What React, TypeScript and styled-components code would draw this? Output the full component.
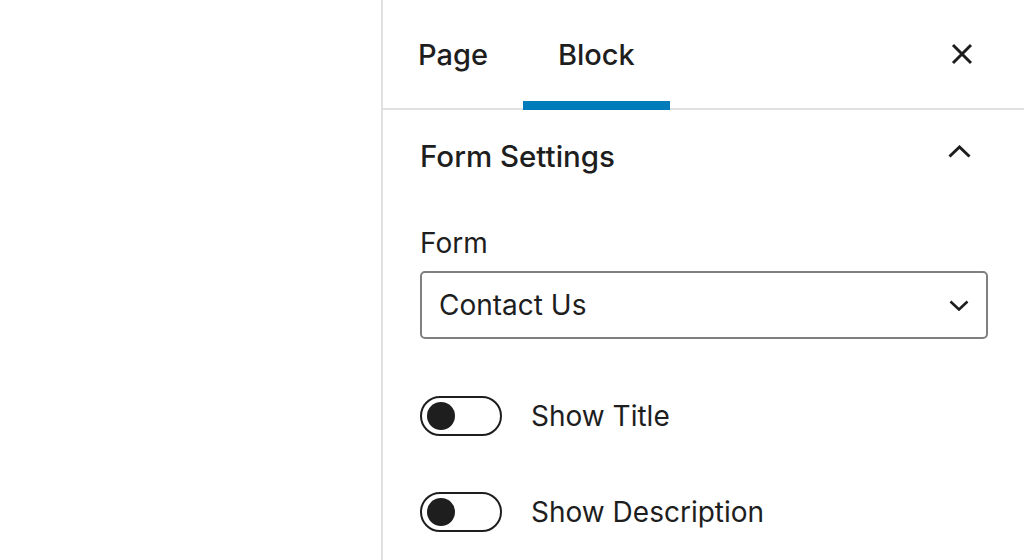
import React, { useState } from "react";
import styled, { createGlobalStyle } from "styled-components";

const GlobalStyle = createGlobalStyle`
  html, body { margin: 0; padding: 0; background: #ffffff; }
  body { font-family: Inter, "Noto Sans", "Liberation Sans", sans-serif; color: #1e1e1e; }
  * { box-sizing: border-box; }
`;

const Page = styled.div`
  display: flex;
  width: 1024px;
  height: 560px;
  overflow: hidden;
  background: #fff;
`;

const Canvas = styled.div`
  width: 381px;
  flex: none;
`;

const Sidebar = styled.aside`
  flex: 1;
  border-left: 2px solid #e0e0e0;
  display: flex;
  flex-direction: column;
`;

const Header = styled.div`
  height: 110px;
  border-bottom: 2px solid #e0e0e0;
  display: flex;
  align-items: stretch;
`;

const Tab = styled.button<{ $active?: boolean }>`
  position: relative;
  background: none;
  border: 0;
  margin: 0;
  padding: 0 35px 0 35px;
  font-family: inherit;
  font-size: 29px;
  font-weight: 500;
  color: #1e1e1e;
  cursor: pointer;
  &::after {
    content: "";
    position: absolute;
    left: 0;
    right: 0;
    bottom: -2px;
    height: 9px;
    background: ${(p) => (p.$active ? "#007cba" : "transparent")};
  }
`;

const CloseButton = styled.button`
  margin-left: auto;
  margin-right: 32px;
  width: 60px;
  background: none;
  border: 0;
  display: flex;
  align-items: center;
  justify-content: center;
  padding: 0;
  cursor: pointer;
`;

const PanelBody = styled.div`
  padding: 0 36px 0 37px;
  display: flex;
  flex-direction: column;
`;

const TitleRow = styled.div`
  height: 94px;
  display: flex;
  align-items: center;
  justify-content: space-between;
`;

const Title = styled.h2`
  margin: 0;
  font-size: 29.5px;
  font-weight: 500;
  line-height: 1;
`;

const TitleIcon = styled.span`
  display: flex;
  padding-right: 17px;
  margin-top: -12px;
`;

const Field = styled.div`
  padding-top: 21px;
  display: flex;
  flex-direction: column;
`;

const Label = styled.label`
  font-size: 28px;
  line-height: 36px;
  font-weight: 400;
`;

const Select = styled.div`
  margin-top: 10px;
  height: 68px;
  border: 2px solid #7f7f7f;
  border-radius: 5px;
  display: flex;
  align-items: center;
  justify-content: space-between;
  padding: 0 17px 0 17px;
  font-size: 28px;
  color: #1e1e1e;
`;

const ToggleRow = styled.div<{ $top: number }>`
  margin-top: ${(p) => p.$top}px;
  display: flex;
  align-items: center;
  gap: 29px;
`;

const Track = styled.button`
  width: 82px;
  height: 40px;
  border: 2px solid #1e1e1e;
  border-radius: 20px;
  background: #fff;
  padding: 0 0 0 5px;
  display: flex;
  align-items: center;
  cursor: pointer;
`;

const Knob = styled.span`
  width: 28px;
  height: 28px;
  border-radius: 50%;
  background: #1e1e1e;
`;

const ToggleLabel = styled.span`
  font-size: 28px;
  line-height: 36px;
`;

const CloseIcon = () => (
  <svg width="22" height="22" viewBox="0 0 22 22">
    <path d="M2 2 L20 20 M20 2 L2 20" stroke="#1e1e1e" strokeWidth="3" fill="none" />
  </svg>
);

const ChevronUp = () => (
  <svg width="23" height="13" viewBox="0 0 23 13">
    <path d="M1.5 11.5 L11.5 2 L21.5 11.5" stroke="#1e1e1e" strokeWidth="3" fill="none" />
  </svg>
);

const ChevronDown = () => (
  <svg width="20" height="11" viewBox="0 0 20 11">
    <path d="M1.5 1.5 L10 9.5 L18.5 1.5" stroke="#1e1e1e" strokeWidth="2.6" fill="none" />
  </svg>
);

const Toggle = ({ label, top }: { label: string; top: number }) => (
  <ToggleRow $top={top}>
    <Track aria-label={label}>
      <Knob />
    </Track>
    <ToggleLabel>{label}</ToggleLabel>
  </ToggleRow>
);

export default function App() {
  const [tab, setTab] = useState("block");
  return (
    <>
      <GlobalStyle />
      <Page>
        <Canvas />
        <Sidebar>
          <Header>
            <Tab $active={tab === "page"} onClick={() => setTab("page")}>Page</Tab>
            <Tab $active={tab === "block"} onClick={() => setTab("block")}>Block</Tab>
            <CloseButton aria-label="Close">
              <CloseIcon />
            </CloseButton>
          </Header>
          <PanelBody>
            <TitleRow>
              <Title>Form Settings</Title>
              <TitleIcon>
                <ChevronUp />
              </TitleIcon>
            </TitleRow>
            <Field>
              <Label>Form</Label>
              <Select>
                <span>Contact Us</span>
                <ChevronDown />
              </Select>
            </Field>
            <Toggle label="Show Title" top={57} />
            <Toggle label="Show Description" top={56} />
          </PanelBody>
        </Sidebar>
      </Page>
    </>
  );
}
